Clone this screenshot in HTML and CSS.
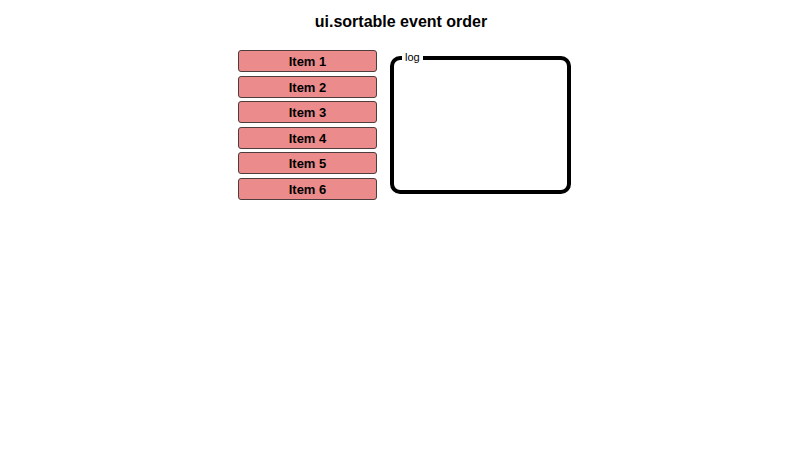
FILE: index.html
```html
<!DOCTYPE html>
<html lang="en">
<head>
  <meta charset="UTF-8">
  <title>ui.sortable event order</title>
  <link rel="stylesheet" href="styles.css">
</head>
<body>

<h1 class="title">ui.sortable event order</h1>

<div class="demo">
  <!-- Sortable items -->
  <ul id="sortable" class="item-list">
    <li class="item">Item 1</li>
    <li class="item">Item 2</li>
    <li class="item">Item 3</li>
    <li class="item">Item 4</li>
    <li class="item">Item 5</li>
    <li class="item">Item 6</li>
  </ul>

  <!-- Event log -->
  <fieldset class="log">
    <legend>log</legend>
    <div id="logOutput"></div>
  </fieldset>
</div>

</body>
</html>
```

FILE: styles.css
```css
html, body {
  margin: 0;
  background-color: white;
  color: black;
  font-family: "Liberation Sans", Arial, sans-serif;
}

/* Page title */
.title {
  margin: 0;
  padding-top: 11px;
  font-size: 16px;
  text-align: center;
  line-height: 22px;
  padding-left: 2px;
}

/* Items and log side by side */
.demo {
  display: flex;
  justify-content: center;
  align-items: flex-start;
  gap: 13px;
  margin-top: 17px;
  padding-left: 9px;
}

.item-list {
  list-style: none;
  margin: 0;
  padding: 0;
  width: 139px;
}

.item {
  height: 20px;
  line-height: 21px;
  margin-bottom: 3.6px;
  border: 1px solid #4f3c3c;
  border-radius: 3px;
  background-color: #eb8b8b;
  text-align: center;
  font-size: 13px;
  font-weight: bold;
}

/* Log box */
.log {
  margin: 2px 0 0 0;
  padding: 0;
  border: 4px solid black;
  border-radius: 10px;
  box-sizing: border-box;
  width: 181px;
  height: 142px;
}

.log legend {
  margin-left: 8px;
  padding: 0 3px;
  font-size: 11px;
  line-height: 11px;
}
```
